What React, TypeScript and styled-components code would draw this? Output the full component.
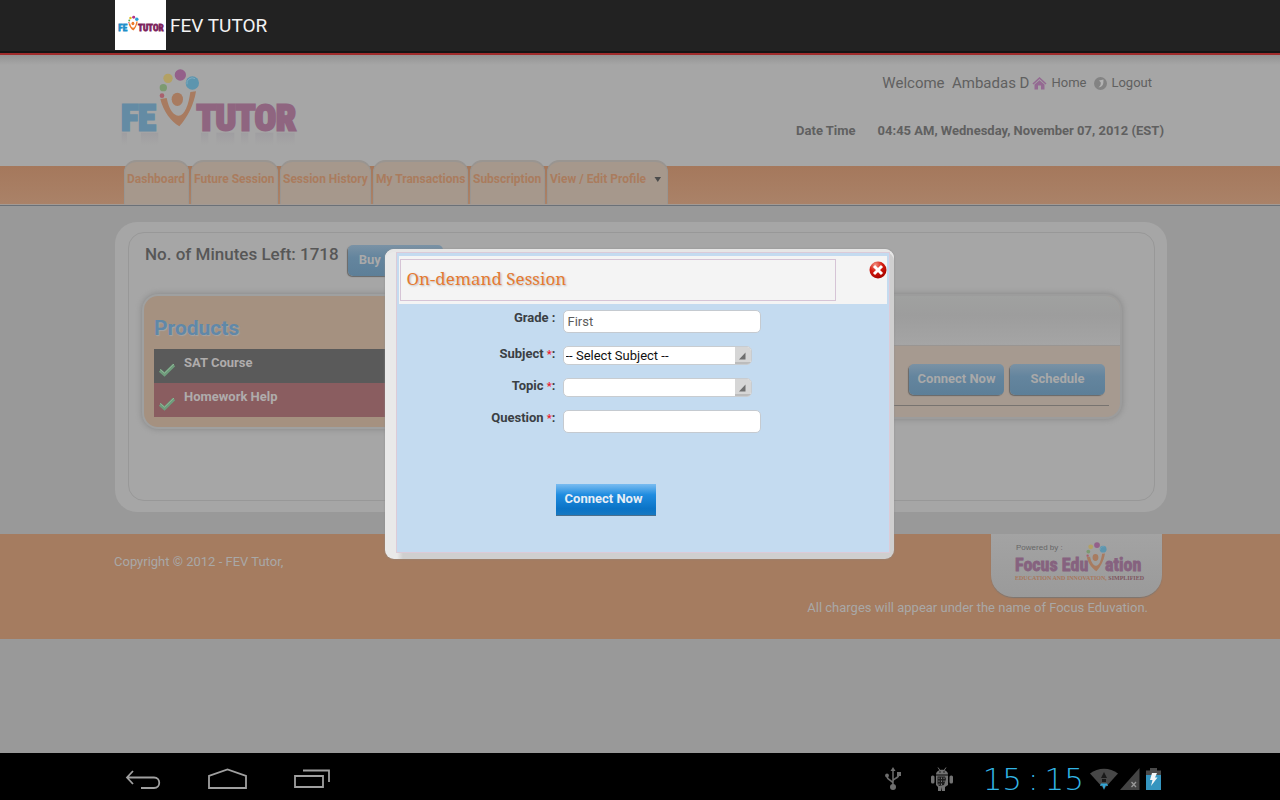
import React from 'react';
import styled, { createGlobalStyle } from 'styled-components';

const GlobalStyle = createGlobalStyle`
  *, *::before, *::after { box-sizing: border-box; }
  body {
    margin: 0;
    background: #000;
    font-family: Roboto, "Liberation Sans", sans-serif;
    font-size: 13px;
    line-height: 16px;
  }
  button, input, select { font-family: inherit; margin: 0; }
  a { color: inherit; text-decoration: none; }
  h1, h2, h3, p, ul { margin: 0; padding: 0; }
  svg { display: block; flex: none; overflow: visible; }
`;

const narrow = '"Noto Sans ExtraCondensed", "Liberation Sans Narrow", "Roboto Condensed", Roboto, sans-serif';

/* ---------- page frame ---------- */

const Screen = styled.div`
  min-height: 100vh;
  display: flex;
  flex-direction: column;
`;

const Column = styled.div`
  width: 100%;
  max-width: 1052px;
  margin: 0 auto;
`;

const TitleBar = styled.header`
  background: #222;
  border-bottom: 2px solid #a02c2c;
  box-shadow: inset 0 -2px 0 #141414;
`;

const TitleInner = styled(Column)`
  display: flex;
  align-items: flex-start;
  gap: 4px;
  height: 53px;
  padding-left: 1px;
`;

const AppIcon = styled.span`
  display: flex;
  align-items: center;
  justify-content: center;
  width: 51px;
  height: 50px;
  background: #fff;
`;

const AppTitle = styled.h1`
  color: #f3f3f3;
  font-size: 19px;
  font-weight: 400;
  line-height: 52px;
`;

const WebArea = styled.main`
  flex: 1;
  position: relative;
  background: #999;
`;

const Overlay = styled.div`
  position: absolute;
  inset: 0;
  display: flex;
  align-items: center;
  justify-content: center;
  padding-right: 2px;
`;

/* ---------- site header ---------- */

const SiteHeader = styled.div`
  background: linear-gradient(#939393, #a6a6a6 10px);
`;

const HeaderInner = styled(Column)`
  display: flex;
  justify-content: space-between;
  height: 105px;
  padding: 12px 2px 0 6px;
`;

const Account = styled.div`
  display: flex;
  flex-direction: column;
  gap: 32px;
  padding-top: 8px;
  color: #606060;
`;

const AccountRow = styled.div`
  display: flex;
  align-items: center;
  justify-content: flex-end;
  gap: 3px;
  padding-right: 12px;
`;

const Welcome = styled.span`
  font-size: 15px;
  white-space: pre;
`;

const IconLink = styled.a`
  display: flex;
  align-items: center;
  gap: 4px;
  & + & { margin-left: 5px; }
`;

const DateRow = styled.p`
  display: flex;
  justify-content: flex-end;
  gap: 22px;
  font-weight: 700;
`;

/* ---------- navigation ---------- */

const NavBand = styled.nav`
  padding-bottom: 1px;
  background: linear-gradient(#a6a6a6 6px, #a5785c 6px, #aa8268 44px, #a39a94 44px);
  border-bottom: 1px solid #6b7178;
`;

const TabList = styled(Column).attrs({ as: 'ul' })`
  display: flex;
  gap: 2px;
  padding-left: 10px;
  list-style: none;
`;

const Tab = styled.li<{ $width: number }>`
  width: ${(p) => p.$width}px;
  height: 44px;
  padding: 9px 0 0 2px;
  border: 1px solid #999591;
  border-top-width: 2px;
  border-bottom: 0;
  border-radius: 12px 12px 0 0;
  background: #a6988c;
  color: #aa7c5e;
  font-size: 12px;
  font-weight: 700;
  white-space: nowrap;
  a { display: flex; align-items: center; gap: 8px; }
`;

/* ---------- dashboard ---------- */

const Body = styled.div`
  padding: 16px 0 22px 2px;
  background: #999;
`;

const Card = styled(Column)`
  padding: 10px 12px 11px 13px;
  border-radius: 22px;
  background: #a6a6a6;
`;

const CardInner = styled.div`
  min-height: 269px;
  padding: 12px 32px 0 13px;
  border: 1px solid #989898;
  border-radius: 16px;
`;

const Minutes = styled.div`
  display: flex;
  align-items: flex-start;
  gap: 9px;
  margin-bottom: 18px;
  padding-left: 3px;
`;

const MinutesText = styled.h2`
  color: #575757;
  font-size: 17px;
  font-weight: 500;
  line-height: 18px;
`;

const SiteButton = styled.button`
  width: 95px;
  height: 31px;
  padding: 0 0 2px;
  border: 0;
  border-radius: 5px;
  background: linear-gradient(#7a92a5, #64859e 40%, #5d7f98);
  box-shadow: -1px 1px 1px #686868;
  color: #a9a9a9;
  font-size: 13px;
  font-weight: 700;
`;

const Panels = styled.div`
  display: flex;
  align-items: flex-start;
`;

const ProductPanel = styled.section`
  flex: 1;
  padding: 17px 0 10px 10px;
  border: 2px solid #9fa0a0;
  border-right: 0;
  border-radius: 16px 0 0 16px;
  background: #a59180;
  box-shadow: 0 0 6px #858585;
`;

const PanelTitle = styled.h2`
  margin-bottom: 6px;
  color: #6088a8;
  font-size: 21px;
  font-weight: 700;
  line-height: 30px;
  text-shadow: 1px 1px 1px #a5a5a5;
`;

const ProductItem = styled.li<{ $tone: string }>`
  display: flex;
  align-items: flex-start;
  gap: 9px;
  height: 34px;
  padding: 6px 5px 0;
  background: ${(p) => p.$tone};
  color: #afacac;
  font-weight: 700;
  svg { margin-top: 8px; }
`;

const SessionPanel = styled.section`
  flex: 1;
  border: 2px solid #9c9c9c;
  border-left: 0;
  border-radius: 0 16px 16px 0;
  background: #a69a90;
  box-shadow: 0 0 6px #858585;
  overflow: hidden;
`;

const SessionHead = styled.div`
  height: 50px;
  background: linear-gradient(#a0a1a0, #9d9d9d 40%, #a5a5a5);
  border-bottom: 1px solid #999592;
`;

const SessionActions = styled.div`
  display: flex;
  justify-content: flex-end;
  gap: 6px;
  height: 60px;
  margin: 0 11px 11px 0;
  padding: 18px 4px 0 0;
  border-bottom: 1px solid #777370;
`;

/* ---------- footer ---------- */

const Footer = styled.footer`
  background: #a57c60;
  color: #a9a8a7;
`;

const FooterInner = styled(Column)`
  display: flex;
  justify-content: space-between;
  height: 105px;
`;

const Copyright = styled.p`
  padding-top: 20px;
`;

const FooterRight = styled.div`
  display: flex;
  flex-direction: column;
  align-items: flex-end;
  gap: 3px;
  padding-right: 4px;
`;

const PoweredBadge = styled.div`
  width: 171px;
  height: 63px;
  padding: 6px 0 0 23px;
  border-radius: 0 0 22px 22px;
  background: linear-gradient(#a3a3a3, #9a9a9a);
  box-shadow: 0 1px 1px #7c7672;
`;

const Charges = styled.p`
  padding-right: 14px;
`;

/* ---------- dialog ---------- */

const Dialog = styled.section`
  width: 509px;
  max-width: 100%;
  padding: 3px 4px 6px 11px;
  border-radius: 9px;
  background: linear-gradient(90deg, #e9e9e9 12px, #cfcfcf 18px);
  box-shadow: inset 0 3px 0 #e6e6e6, 0 0 2px #8c8c8c;
`;

const DialogBody = styled.div`
  min-height: 301px;
  padding: 3px 2px;
  border: 1px solid #dccbd8;
  background: #c4dbf0;
`;

const DialogHead = styled.div`
  display: flex;
  justify-content: space-between;
  height: 48px;
  padding: 3px 0 3px 1px;
  background: #f4f4f4;
`;

const DialogTitle = styled.h2`
  width: 436px;
  padding-left: 6px;
  border: 1px solid #d6c4d6;
  color: #e57a32;
  font-family: "Noto Serif Condensed", "Noto Serif", "DejaVu Serif Condensed", "DejaVu Serif", serif;
  font-size: 17px;
  font-weight: 400;
  line-height: 38px;
  text-shadow: 1px 1px 2px #bbb;
`;

const CloseButton = styled.button`
  width: 18px;
  height: 18px;
  margin-top: 2px;
  padding: 0;
  border: 0;
  background: none;
`;

const Form = styled.form`
  display: grid;
  grid-template-columns: 157px 198px;
  column-gap: 7px;
  row-gap: 13px;
  padding-top: 6px;
`;

const Label = styled.label`
  color: #3b3f44;
  font-weight: 700;
  text-align: right;
  span { color: #f01830; font-size: 11px; }
`;

const TextBox = styled.input`
  width: 198px;
  height: 23px;
  padding: 0 4px;
  border: 1px solid #c5cad0;
  border-radius: 5px;
  background: #fff;
  color: #5c5c5c;
  font-size: 13px;
`;

const SelectBox = styled.div`
  display: flex;
  width: 189px;
  height: 19px;
  border: 1px solid #c8ccd0;
  border-radius: 5px;
  background: #fff;
  overflow: hidden;
  select {
    flex: 1;
    padding: 0 2px;
    border: 0;
    appearance: none;
    background: transparent;
    color: #111;
    font-size: 13px;
  }
  svg { background: #d6d6d6; }
`;

const ConnectButton = styled.button`
  grid-column: 1 / -1;
  width: 100px;
  height: 32px;
  margin: 38px 0 0 157px;
  padding: 0 4px 2px 0;
  border: 0;
  border-bottom: 1px solid #4c6f8c;
  background: linear-gradient(#7abcf0, #1f8ce0 35%, #0a73c6 80%, #1878c0);
  color: #e6eef6;
  font-size: 13px;
  font-weight: 700;
`;

/* ---------- system bar ---------- */

const SystemBar = styled.footer`
  background: #000;
`;

const SystemInner = styled(Column)`
  display: flex;
  align-items: center;
  justify-content: space-between;
  height: 47px;
  padding: 4px 5px 0 11px;
`;

const SystemGroup = styled.div<{ $gap: number }>`
  display: flex;
  align-items: center;
  gap: ${(p) => p.$gap}px;
`;

const SystemButton = styled.button`
  padding: 0;
  border: 0;
  background: none;
`;

const Clock = styled.time`
  display: flex;
  gap: 6px;
  color: #33b5e5;
  font-family: "DejaVu Sans Light", "DejaVu Sans", sans-serif;
  font-size: 31px;
  font-weight: 200;
  line-height: 30px;
`;

/* ---------- drawings ---------- */

type Palette = { fe: string; tutor: string; body: string; dots: string[] };

const vivid: Palette = { fe: '#1f8fc9', tutor: '#7d1f5c', body: '#ee7a28', dots: ['#d8203c', '#57a845', '#e3b91c', '#b0338c', '#2aa0d6'] };
const muted: Palette = { fe: '#648ba4', tutor: '#8f6580', body: '#a87b60', dots: ['#a9606c', '#7c9a70', '#b3a164', '#94608a', '#5d95ae'] };

const Figure = ({ c }: { c: Palette }) => (
  <g>
    <circle cx="186" cy="286" r="7" fill={c.dots[0]} />
    <circle cx="190" cy="262" r="11" fill={c.dots[1]} />
    <circle cx="204" cy="234" r="14" fill={c.dots[2]} />
    <circle cx="241" cy="224" r="17" fill={c.dots[3]} />
    <circle cx="277" cy="248" r="20" fill={c.dots[4]} />
    <path d="M261 252a16 16 0 0 1 24-17" fill="none" stroke="#fff" strokeOpacity="0.2" strokeWidth="3" />
    <ellipse cx="232" cy="297" rx="17" ry="20" fill={c.body} />
    <path d="M181 296L200 293C207 328 221 346 236 346C254 346 266 312 271 275L288 273C281 315 263 350 238 378C213 363 190 333 181 296Z" fill={c.body} />
  </g>
);

const Logo = ({ c, width, height, reflect }: { c: Palette; width: number; height: number; reflect?: boolean }) => (
  <svg width={width} height={height} viewBox="60 200 531 240" role="img" aria-label="FEV Tutor">
    <g fontFamily={narrow} fontWeight="700" fontSize="106" strokeWidth="9">
      <text x="64" y="389" fill={c.fe} stroke={c.fe}>FE</text>
      <text x="290" y="389" fill={c.tutor} stroke={c.tutor}>TUTOR</text>
    </g>
    <Figure c={c} />
    {reflect && (
      <g>
        <linearGradient id="fade" x1="0" y1="0" x2="0" y2="1">
          <stop offset="0" stopColor="#8a8590" stopOpacity="0.25" />
          <stop offset="1" stopColor="#8a8590" stopOpacity="0" />
        </linearGradient>
        {[[65, 16], [123, 52], [303, 22], [349, 54], [423, 22], [466, 54], [530, 54]].map(([x, w]) => (
          <rect key={x} x={x} y="397" width={w} height="38" fill="url(#fade)" />
        ))}
      </g>
    )}
  </svg>
);

const FocusLogo = () => (
  <svg width="140" height="44" viewBox="0 0 140 44" role="img" aria-label="Powered by Focus Eduvation">
    <text x="2" y="10" fontSize="8" fontFamily="Liberation Sans, sans-serif" fill="#666">Powered by :</text>
    <g fontFamily={narrow} fontWeight="700" fontSize="18" fill="#86627f" stroke="#86627f" strokeWidth="0.8">
      <text x="1" y="31">Focus Edu</text>
      <text x="91" y="31">ation</text>
    </g>
    <svg x="71" y="1" width="23" height="31" viewBox="176 200 124 182"><Figure c={muted} /></svg>
    <text x="1" y="40" fontSize="6" fontFamily="Liberation Serif, serif" fontWeight="700" fill="#a8765a">
      EDUCATION AND INNOVATION, <tspan fill="#7d5560">SIMPLIFIED</tspan>
    </text>
  </svg>
);

const HomeIcon = () => (
  <svg width="15" height="13" viewBox="0 0 15 13">
    <path d="M1 7L7.500 1L14 7" fill="none" stroke="#946a92" strokeWidth="1.600" />
    <path d="M2.500 7.500L7.500 3.200L12.500 7.500V12.500H9V8.500H6V12.500H2.500Z" fill="#946a92" />
  </svg>
);

const LogoutIcon = () => (
  <svg width="13" height="13" viewBox="0 0 13 13">
    <circle cx="6.500" cy="6.500" r="6.500" fill="#838383" />
    <path d="M5 3.500L9.500 2.500L9.300 6C9 8.500 7.500 10 4.500 10.500C6.300 9 6.900 7.500 6.800 5.500Z" fill="#b3b3b3" />
  </svg>
);

const CheckIcon = () => (
  <svg width="16" height="14" viewBox="0 0 16 14">
    <path d="M1 7.500L5.500 11.500L15 2" fill="none" stroke="#6f9c7c" strokeWidth="3.400" />
    <path d="M1 6.300L5.500 10.200L15 1" fill="none" stroke="#8db595" strokeWidth="1" />
  </svg>
);

const CornerArrow = () => (
  <svg width="16" height="17" viewBox="0 0 16 17">
    <rect y="15" width="16" height="2" fill="#bcbcbc" />
    <path d="M4 12.500L10.500 5.500V12.500Z" fill="#6f6f6f" />
  </svg>
);

const CloseIcon = () => (
  <svg width="18" height="18" viewBox="0 0 18 18">
    <radialGradient id="ball" cx="0.35" cy="0.2" r="0.8">
      <stop offset="0" stopColor="#f29080" />
      <stop offset="0.5" stopColor="#d41a10" />
      <stop offset="1" stopColor="#a80400" />
    </radialGradient>
    <circle cx="9" cy="9" r="8.500" fill="url(#ball)" />
    <path d="M5 5L13 13M13 5L5 13" stroke="#fff" strokeWidth="3" />
  </svg>
);

const BackIcon = () => (
  <svg width="36" height="20" viewBox="0 0 36 20" fill="none" stroke="#a0a0a0" strokeWidth="1.800">
    <path d="M8 2L2 8.500L8 15M2 8.500H29C36 8.500 36 19 29 19H16" />
  </svg>
);

const HomeKeyIcon = () => (
  <svg width="39" height="21" viewBox="0 0 39 21" fill="none" stroke="#a0a0a0" strokeWidth="1.800">
    <path d="M1 20V8L19.500 1.500L38 8V20Z" />
  </svg>
);

const RecentsIcon = () => (
  <svg width="36" height="19" viewBox="0 0 36 19" fill="none" stroke="#a0a0a0" strokeWidth="1.800">
    <path d="M1 7H29V18H1ZM9 1.500H35V13" />
  </svg>
);

const UsbIcon = () => (
  <svg width="16" height="23" viewBox="0 0 16 23" fill="#6e6e6e">
    <path d="M8 2V20M8 16.500C8 13 2 14 2 9M8 14C8 11 14 12 14 7" fill="none" stroke="#6e6e6e" strokeWidth="1.500" />
    <path d="M8 0L10.500 4H5.500Z" />
    <circle cx="8" cy="20" r="3" />
    <circle cx="2" cy="8.500" r="1.900" />
    <rect x="12" y="5" width="4" height="4" />
  </svg>
);

const AndroidIcon = () => (
  <svg width="22" height="24" viewBox="0 0 22 24" fill="#727272">
    <path d="M5 7.500C5 1 17 1 17 7.500Z" />
    <path d="M7 0.500L9 3.500M15 0.500L13 3.500" stroke="#727272" />
    <rect x="0" y="8.500" width="3.500" height="8" rx="1.500" />
    <rect x="18.500" y="8.500" width="3.500" height="8" rx="1.500" />
    <path d="M5 8.500H17V18L14 20V24H11V20L10 24H7V20L5 18Z" />
    <path d="M6.500 9.500H14L15 12L13 18L8 19L6.500 17Z" fill="#1c1c1c" />
    <path d="M8 10.500V18M10.500 10.500V18M13 10.500V16" stroke="#727272" strokeWidth="1" strokeDasharray="1.500 1.500" />
    <circle cx="9" cy="5" r="0.700" fill="#000" />
    <circle cx="13" cy="5" r="0.700" fill="#000" />
  </svg>
);

const WifiIcon = () => (
  <svg width="28" height="22" viewBox="0 0 28 22">
    <path d="M0 5.500C8 -1 20 -1 28 5.500L14 21Z" fill="#474747" />
    <path d="M14 4L17 10H11ZM12 11H16V14H12Z" fill="#191919" />
    <path d="M11 15.500H17L18 18L15.500 17.500L14 22L12.500 17.500L10 18Z" fill="#33a5d5" />
  </svg>
);

const SignalIcon = () => (
  <svg width="20" height="22" viewBox="0 0 20 22">
    <path d="M19.500 0V22H0Z" fill="#444" />
    <path d="M11.500 14L16 19M16 14L11.500 19" stroke="#999" strokeWidth="1.300" />
  </svg>
);

const BatteryIcon = () => (
  <svg width="15" height="22" viewBox="0 0 15 22">
    <path d="M4 0H11V2.500H15V8H0V2.500H4Z" fill="#4a4a4a" />
    <rect y="7" width="15" height="15" fill="#3595bf" />
    <path d="M6 5H11L9 9.500H11.500L5 18L6.500 12H4Z" fill="#f2f6f8" />
  </svg>
);

/* ---------- app ---------- */

const tabs = [
  { label: 'Dashboard', width: 65 },
  { label: 'Future Session', width: 87 },
  { label: 'Session History', width: 91 },
  { label: 'My Transactions', width: 95 },
  { label: 'Subscription', width: 75 },
  { label: 'View / Edit Profile', width: 121, menu: true },
];

const products = [
  { name: 'SAT Course', tone: '#5a5a5a' },
  { name: 'Homework Help', tone: '#8a5d60' },
];

export default function App() {
  return (
    <Screen>
      <GlobalStyle />
      <TitleBar>
        <TitleInner>
          <AppIcon><Logo c={vivid} width={46} height={21} /></AppIcon>
          <AppTitle>FEV TUTOR</AppTitle>
        </TitleInner>
      </TitleBar>

      <WebArea>
        <SiteHeader>
          <HeaderInner>
            <Logo c={muted} width={177} height={80} reflect />
            <Account>
              <AccountRow>
                <Welcome>{'Welcome  Ambadas D'}</Welcome>
                <IconLink href="#home"><HomeIcon />Home</IconLink>
                <IconLink href="#logout"><LogoutIcon />Logout</IconLink>
              </AccountRow>
              <DateRow>
                <span>Date Time</span>
                <span>04:45 AM, Wednesday, November 07, 2012 (EST)</span>
              </DateRow>
            </Account>
          </HeaderInner>
        </SiteHeader>

        <NavBand>
          <TabList>
            {tabs.map((t) => (
              <Tab key={t.label} $width={t.width}>
                <a href="#tab">
                  {t.label}
                  {t.menu && <svg width="8" height="5" viewBox="0 0 8 5"><path d="M0.500 0H7L3.800 5Z" fill="#4c4c4c" /></svg>}
                </a>
              </Tab>
            ))}
          </TabList>
        </NavBand>

        <Body>
          <Card>
            <CardInner>
              <Minutes>
                <MinutesText>No. of Minutes Left: 1718</MinutesText>
                <SiteButton type="button">Buy Minutes</SiteButton>
              </Minutes>
              <Panels>
                <ProductPanel>
                  <PanelTitle>Products</PanelTitle>
                  <ul>
                    {products.map((p) => (
                      <ProductItem key={p.name} $tone={p.tone}><CheckIcon />{p.name}</ProductItem>
                    ))}
                  </ul>
                </ProductPanel>
                <SessionPanel>
                  <SessionHead />
                  <SessionActions>
                    <SiteButton type="button">Connect Now</SiteButton>
                    <SiteButton type="button">Schedule</SiteButton>
                  </SessionActions>
                </SessionPanel>
              </Panels>
            </CardInner>
          </Card>
        </Body>

        <Footer>
          <FooterInner>
            <Copyright>Copyright © 2012 - FEV Tutor,</Copyright>
            <FooterRight>
              <PoweredBadge><FocusLogo /></PoweredBadge>
              <Charges>All charges will appear under the name of Focus Eduvation.</Charges>
            </FooterRight>
          </FooterInner>
        </Footer>

        <Overlay>
          <Dialog role="dialog" aria-labelledby="dialog-title">
            <DialogBody>
              <DialogHead>
                <DialogTitle id="dialog-title">On-demand Session</DialogTitle>
                <CloseButton type="button" aria-label="Close"><CloseIcon /></CloseButton>
              </DialogHead>
              <Form>
                <Label htmlFor="grade">Grade :</Label>
                <TextBox id="grade" defaultValue="First" />
                <Label htmlFor="subject">Subject <span>*</span>:</Label>
                <SelectBox>
                  <select id="subject"><option>-- Select Subject --</option></select>
                  <CornerArrow />
                </SelectBox>
                <Label htmlFor="topic">Topic <span>*</span>:</Label>
                <SelectBox>
                  <select id="topic"><option></option></select>
                  <CornerArrow />
                </SelectBox>
                <Label htmlFor="question">Question <span>*</span>:</Label>
                <TextBox id="question" />
                <ConnectButton type="button">Connect Now</ConnectButton>
              </Form>
            </DialogBody>
          </Dialog>
        </Overlay>
      </WebArea>

      <SystemBar>
        <SystemInner>
          <SystemGroup $gap={47}>
            <SystemButton type="button" aria-label="Back"><BackIcon /></SystemButton>
            <SystemButton type="button" aria-label="Home"><HomeKeyIcon /></SystemButton>
            <SystemButton type="button" aria-label="Recent apps"><RecentsIcon /></SystemButton>
          </SystemGroup>
          <SystemGroup $gap={30}>
            <UsbIcon />
            <AndroidIcon />
            <SystemGroup $gap={6}>
              <Clock><span>15</span><span>:</span><span>15</span></Clock>
              <SystemGroup $gap={2}><WifiIcon /><SignalIcon /></SystemGroup>
              <BatteryIcon />
            </SystemGroup>
          </SystemGroup>
        </SystemInner>
      </SystemBar>
    </Screen>
  );
}
